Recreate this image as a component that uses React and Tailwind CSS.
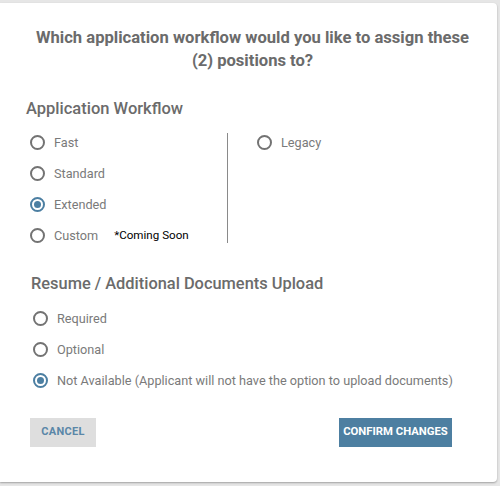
import { useState } from "react";

function Radio({ label, checked, onChange, children }) {
  return (
    <label className="flex items-center h-[31px] cursor-pointer">
      <span
        className={`flex items-center justify-center w-[15px] h-[15px] rounded-full border-2 ${
          checked ? "border-[#4c7fa2]" : "border-[#737373]"
        }`}
      >
        {checked && <span className="w-[7px] h-[7px] rounded-full bg-[#4c7fa2]" />}
      </span>
      <input type="radio" className="hidden" checked={checked} onChange={onChange} />
      <span className="ml-[9px] text-[12.7px] text-[#7a7a7a]">{label}</span>
      {children}
    </label>
  );
}

export default function App() {
  const [workflow, setWorkflow] = useState("Extended");
  const [upload, setUpload] = useState("Not Available");

  const left = ["Fast", "Standard", "Extended", "Custom"];
  const uploads = [
    "Required",
    "Optional",
    "Not Available (Applicant will not have the option to upload documents)",
  ];

  return (
    <div className="min-h-[486px] bg-[#e6e6e6] pt-[3px] font-['Roboto',sans-serif]">
      <div className="w-[497px] h-[479px] bg-white rounded-r-[4px] shadow-[0_1px_2px_rgba(0,0,0,0.3)]">
        {/* Title */}
        <h1 className="pt-[23px] pl-[28px] pr-[20px] text-center text-[16.6px] leading-[23px] font-bold text-[#6b6b6b]">
          Which application workflow would you like to assign these (2) positions to?
        </h1>

        {/* Application Workflow */}
        <div className="pl-[26px] pt-[25px]">
          <h2 className="text-[16.5px] leading-[24px] font-medium text-[#6b6b6b]">Application Workflow</h2>
          <div className="flex mt-[6px]">
            <div className="pl-[4px] w-[201px]">
              {left.map((o) => (
                <Radio key={o} label={o} checked={workflow === o} onChange={() => setWorkflow(o)}>
                  {o === "Custom" && (
                    <span className="ml-[16px] text-[11.6px] text-black">*Coming Soon</span>
                  )}
                </Radio>
              ))}
            </div>
            <div className="w-px h-[110px] mt-[6px] bg-[#8a8a8a]" />
            <div className="pl-[29px]">
              <Radio label="Legacy" checked={workflow === "Legacy"} onChange={() => setWorkflow("Legacy")} />
            </div>
          </div>
        </div>

        {/* Resume upload */}
        <div className="pl-[31px] pt-[21px]">
          <h2 className="text-[16.4px] leading-[24px] font-medium text-[#6b6b6b]">
            Resume / Additional Documents Upload
          </h2>
          <div className="mt-[7px] pl-[2px]">
            {uploads.map((o) => {
              const key = o.startsWith("Not") ? "Not Available" : o;
              return (
                <Radio key={o} label={o} checked={upload === key} onChange={() => setUpload(key)} />
              );
            })}
          </div>
        </div>

        {/* Actions */}
        <div className="flex justify-between pl-[30px] pr-[45px] mt-[22px]">
          <button className="h-[29px] w-[66px] bg-[#dedede] text-[11px] font-bold tracking-[0.3px] text-[#5a87a8]">
            CANCEL
          </button>
          <button className="h-[29px] w-[113px] bg-[#4d7fa1] text-[11.3px] font-bold text-white">
            CONFIRM CHANGES
          </button>
        </div>
      </div>
    </div>
  );
}
